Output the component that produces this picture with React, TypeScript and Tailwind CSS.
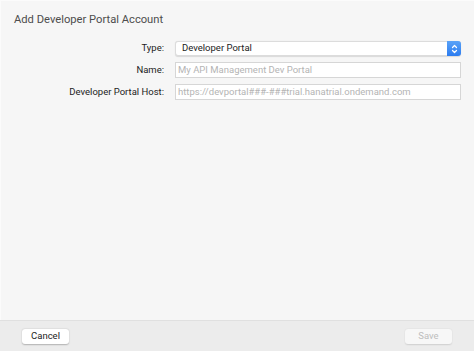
export default function App() {
  return (
    <div
      className="flex h-[351px] w-[474px] flex-col bg-[#f6f6f6] text-[#222]"
      style={{ fontFamily: 'Roboto, "Noto Sans", sans-serif' }}
    >
      <div className="flex-1 border-l border-t border-[#fbfbfb] px-[13px] pt-[11px]">
        <h1 className="text-[11.2px] leading-[16px] text-[#4d4d4d]">Add Developer Portal Account</h1>

        <div className="mt-[13px] grid grid-cols-[150px_1fr] items-center gap-x-[11px] gap-y-[6px] text-[9.5px]">
          <label className="text-right">Type:</label>
          <div className="flex h-[15px] items-center justify-between rounded-[3px] border border-[#dcdcdc] bg-white pl-[6px] shadow-[0_0.5px_1px_rgba(0,0,0,0.12)]">
            <span>Developer Portal</span>
            <span className="-mr-px flex h-[15px] w-[14px] items-center justify-center rounded-r-[3px] bg-gradient-to-b from-[#5aa2f7] to-[#2c7cf0]">
              <svg width="7" height="10" viewBox="0 0 7 10" fill="none" stroke="white" strokeWidth="1.2" strokeLinecap="round" strokeLinejoin="round">
                <path d="M1.5 3.5 L3.5 1.5 L5.5 3.5" />
                <path d="M1.5 6.5 L3.5 8.5 L5.5 6.5" />
              </svg>
            </span>
          </div>

          <label className="text-right">Name:</label>
          <div className="flex h-[16px] items-center border border-[#d6d6d6] bg-white px-[2px] text-[#b4b4b4]">
            My API Management Dev Portal
          </div>

          <label className="text-right">Developer Portal Host:</label>
          <div className="flex h-[16px] items-center border border-[#d6d6d6] bg-white px-[2px] text-[#b4b4b4]">
            https://devportal###-###trial.hanatrial.ondemand.com
          </div>
        </div>
      </div>

      <div className="flex h-[31px] items-center justify-between border-t border-[#e0e0e0] bg-[#ececec] px-[22px]">
        <button className="h-[15px] w-[47px] rounded-[3px] bg-white text-[9.5px] leading-none text-[#222] shadow-[0_0.5px_1.5px_rgba(0,0,0,0.25)]">
          Cancel
        </button>
        <button className="h-[15px] w-[47px] rounded-[3px] bg-[#f7f7f7] text-[9.5px] leading-none text-[#bdbdbd] shadow-[0_0.5px_1.5px_rgba(0,0,0,0.12)]">
          Save
        </button>
      </div>
    </div>
  );
}
